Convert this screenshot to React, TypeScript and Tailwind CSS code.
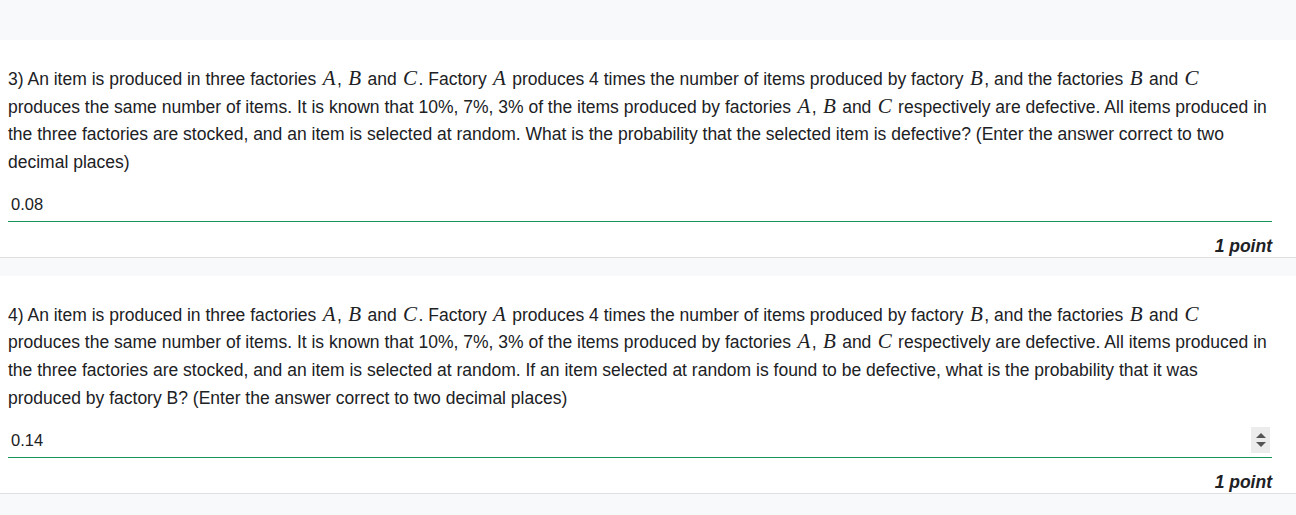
import React from 'react';

function M({ children }: { children: React.ReactNode }) {
  return (
    <span className="mx-[1.5px] italic text-[21px] leading-none font-['Liberation_Serif','DejaVu_Serif',serif]">
      {children}
    </span>
  );
}

function Spinner() {
  return (
    <div className="flex h-[26px] w-[19px] flex-col items-center justify-center gap-[4px] bg-[#ececec]">
      <div className="h-0 w-0 border-x-[5px] border-b-[5px] border-x-transparent border-b-[#555]" />
      <div className="h-0 w-0 border-x-[5px] border-t-[5px] border-x-transparent border-t-[#555]" />
    </div>
  );
}

function Question({
  lines,
  answer,
  spinner,
}: {
  lines: React.ReactNode[];
  answer: string;
  spinner?: boolean;
}) {
  return (
    <div className="bg-white border-b border-[#e0e0e0] pt-[26px] pl-2 pr-6 pb-[1px]">
      <div className="text-[17.5px] leading-[27.7px] text-[#202124]">
        {lines.map((l, i) => (
          <div key={i} className="h-[27.7px] whitespace-nowrap">
            {l}
          </div>
        ))}
      </div>
      <div className="mt-[11px] flex h-[34px] items-center justify-between border-b border-[#16955a] pl-[3px] pr-[2px]">
        <span className="text-[16.5px] text-[#202124]">{answer}</span>
        {spinner && <Spinner />}
      </div>
      <div className="mt-[14px] text-right text-[17.5px] leading-[20px] font-bold italic text-[#202124]">
        1 point
      </div>
    </div>
  );
}

const line1 = (n: string) => (
  <>
    {n}) An item is produced in three factories <M>A</M>, <M>B</M> and <M>C</M>. Factory <M>A</M>{' '}
    produces 4 times the number of items produced by factory <M>B</M>, and the factories <M>B</M>{' '}
    and <M>C</M>
  </>
);

const line2 = (
  <>
    produces the same number of items. It is known that 10%, 7%, 3% of the items produced by
    factories <M>A</M>, <M>B</M> and <M>C</M> respectively are defective. All items produced in
  </>
);

export default function App() {
  return (
    <div className="min-h-[515px] bg-[#f8f9fa] pt-10 font-['Liberation_Sans',Arial,sans-serif]">
      <Question
        answer="0.08"
        lines={[
          line1('3'),
          line2,
          'the three factories are stocked, and an item is selected at random. What is the probability that the selected item is defective? (Enter the answer correct to two',
          'decimal places)',
        ]}
      />
      <div className="h-[18px]" />
      <Question
        answer="0.14"
        spinner
        lines={[
          line1('4'),
          line2,
          'the three factories are stocked, and an item is selected at random. If an item selected at random is found to be defective, what is the probability that it was',
          'produced by factory B? (Enter the answer correct to two decimal places)',
        ]}
      />
    </div>
  );
}
